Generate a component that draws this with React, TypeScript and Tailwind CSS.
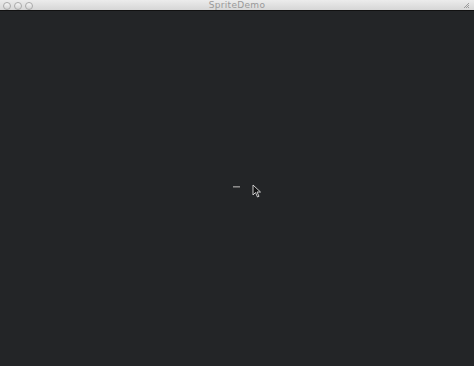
import React from "react";

const TrafficLight = () => (
  <span className="block w-[8px] h-[8px] rounded-full border border-[#a9a9a9] bg-gradient-to-b from-[#f6f6f6] to-[#d2d2d2]" />
);

export default function App() {
  return (
    <div className="w-[474px] h-[366px] flex flex-col bg-[#232527] overflow-hidden" style={{ fontFamily: '"Lucida Grande", "DejaVu Sans", sans-serif' }}>
      <div className="h-[11px] shrink-0 grid grid-cols-[1fr_auto_1fr] items-center px-[3px] bg-gradient-to-b from-[#ececec] to-[#d6d6d6] border-b border-[#111]">
        <div className="flex gap-[3px]">
          <TrafficLight />
          <TrafficLight />
          <TrafficLight />
        </div>
        <div className="text-[9px] leading-[11px] text-[#999] tracking-[0.3px]">
          SpriteDemo
        </div>
        <div className="flex justify-end">
          <svg width="7" height="7" viewBox="0 0 7 7" className="mr-[1px]">
            <path d="M1 6 L6 1 M3 6 L6 3 M5 6 L6 5" stroke="#8a8a8a" strokeWidth="0.8" />
          </svg>
        </div>
      </div>
      <div className="flex-1 relative">
        <div className="absolute left-[233px] top-[175px] w-[7px] h-[1px] bg-[#8a8a8a]" />
        <div className="absolute left-[233px] top-[176px] w-[7px] h-[1px] bg-[#5e5e5e]" />
        <svg className="absolute left-[252px] top-[173px]" width="10" height="14" viewBox="0 0 10 14">
          <path d="M1 1 L1 11 L3.5 8.5 L5.5 13 L7 12.3 L5 8 L8.5 8 Z" fill="#111" stroke="#ddd" strokeWidth="0.9" strokeLinejoin="round" />
        </svg>
      </div>
    </div>
  );
}
